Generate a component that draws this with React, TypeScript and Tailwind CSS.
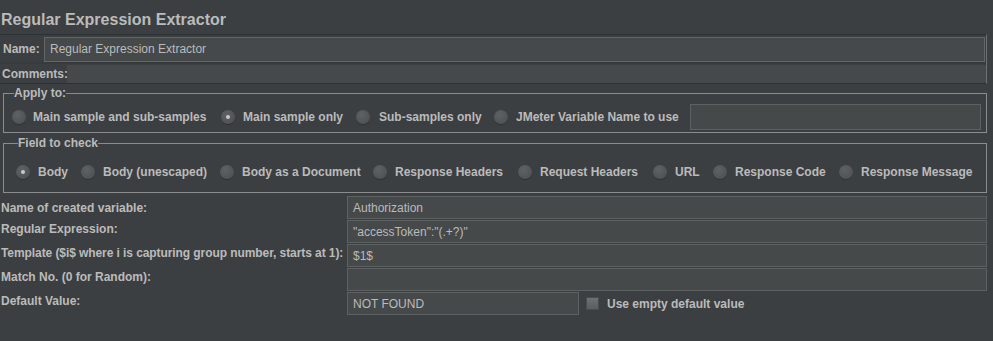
import React from "react";

const font = { fontFamily: '"Liberation Sans", Arial, sans-serif' };

function Radio({ checked, label, gap = "ml-[8px]", className = "" }: { checked?: boolean; label: string; gap?: string; className?: string }) {
  return (
    <div className={`flex items-center shrink-0 ${className}`}>
      <div className="w-[14px] h-[14px] rounded-full bg-[radial-gradient(circle_at_40%_35%,#5e6264,#4a4d4f)] shadow-[0_1px_0_#2f3133] flex items-center justify-center">
        {checked && <div className="w-[4px] h-[4px] rounded-full bg-[#c8c8c8]" />}
      </div>
      <span className={`${gap} text-[12px] font-bold text-[#bbbbbb] leading-[14px] whitespace-nowrap`}>{label}</span>
    </div>
  );
}

function Field({ value, className = "" }: { value?: string; className?: string }) {
  return (
    <div
      className={`h-[23px] bg-[#45494a] border border-[#5e6162] flex items-center pl-[5px] text-[12px] text-[#bbbbbb] whitespace-nowrap ${className}`}
    >
      {value}
    </div>
  );
}

export default function App() {
  return (
    <div className="w-[993px] h-[341px] bg-[#3c3f41] overflow-hidden text-[#bbbbbb]" style={font}>
      <div className="h-[34px] flex items-center pl-[1px] pt-[6px]">
        <span className="text-[16px] font-bold text-[#bbbbbb] leading-[20px]">Regular Expression Extractor</span>
      </div>

      <div className="w-[987px] border-t border-[#2e3133] border-b border-b-[#2e3133] border-r border-r-[#6e7072] flex flex-col">
        <div className="flex items-center h-[27px] pt-[1px]">
          <span className="pl-[3px] w-[44px] text-[12px] font-bold">Name:</span>
          <Field value="Regular Expression Extractor" className="flex-1 h-[25px] mr-[1px] border-[#636668]" />
        </div>
        <div className="flex items-center h-[21px] border-t-[2px] border-[#383b3d] pt-[1px]">
          <span className="pl-[2px] w-[67px] text-[12px] font-bold">Comments:</span>
          <div className="flex-1 h-[18px] bg-[#45494a]" />
        </div>
      </div>

      <fieldset className="ml-[3px] w-[984px] mt-[2px] border border-[#8a8c8e] pl-[8px] pb-[2px]">
        <legend className="ml-[2px] text-[12px] font-bold leading-[14px] px-0">Apply to:</legend>
        <div className="flex items-center h-[26px] mt-[4px]">
          <Radio label="Main sample and sub-samples" gap="ml-[7px]" className="w-[209px]" />
          <Radio checked label="Main sample only" gap="ml-[8px]" className="w-[135px]" />
          <Radio label="Sub-samples only" gap="ml-[9px]" className="w-[138px]" />
          <Radio label="JMeter Variable Name to use" gap="ml-[8px]" className="w-[196px]" />
          <Field className="w-[291px] h-[26px]" />
        </div>
      </fieldset>

      <fieldset className="ml-[3px] w-[984px] mt-[3px] border border-[#8a8c8e] pl-[12px] pb-[8px]">
        <legend className="ml-[2px] text-[12px] font-bold leading-[14px] px-0">Field to check</legend>
        <div className="flex items-center h-[24px] mt-[10px]">
          <Radio checked label="Body" className="w-[65px]" />
          <Radio label="Body (unescaped)" className="w-[139px]" />
          <Radio label="Body as a Document" className="w-[153px]" />
          <Radio label="Response Headers" className="w-[145px]" />
          <Radio label="Request Headers" className="w-[135px]" />
          <Radio label="URL" className="w-[60px]" />
          <Radio label="Response Code" className="w-[126px]" />
          <Radio label="Response Message" />
        </div>
      </fieldset>

      <div className="mt-[3px] flex flex-col gap-[1px]">
        <div className="flex h-[23px]">
          <span className="w-[347px] pl-[1px] text-[12px] font-bold leading-[16px] pt-[4px]">Name of created variable:</span>
          <Field value="Authorization" className="w-[640px]" />
        </div>
        <div className="flex h-[23px]">
          <span className="w-[347px] pl-[1px] text-[12px] font-bold leading-[16px] pt-[1px]">Regular Expression:</span>
          <Field value={'"accessToken":"(.+?)"'} className="w-[640px]" />
        </div>
        <div className="flex h-[23px]">
          <span className="w-[347px] pl-[1px] text-[12px] font-bold leading-[16px] pt-[1px] whitespace-nowrap tracking-[-0.08px]">Template ($i$ where i is capturing group number, starts at 1):</span>
          <Field value="$1$" className="w-[640px]" />
        </div>
        <div className="flex h-[23px]">
          <span className="w-[347px] pl-[1px] text-[12px] font-bold leading-[16px] pt-[1px]">Match No. (0 for Random):</span>
          <Field className="w-[640px]" />
        </div>
        <div className="flex h-[23px]">
          <span className="w-[347px] pl-[1px] text-[12px] font-bold leading-[16px] pt-[1px]">Default Value:</span>
          <Field value="NOT FOUND" className="w-[232px]" />
          <div className="flex items-center ml-[7px]">
            <div className="w-[13px] h-[13px] bg-[linear-gradient(#6e7173,#5a5d5f)] border border-[#4a4d4f]" />
            <span className="ml-[8px] text-[12px] font-bold">Use empty default value</span>
          </div>
        </div>
      </div>
    </div>
  );
}
